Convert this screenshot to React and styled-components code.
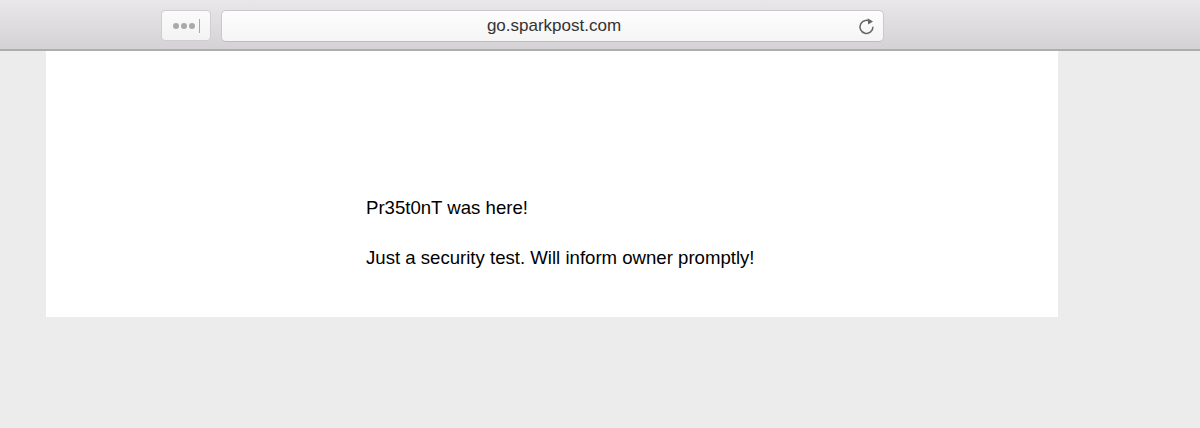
import React from "react";
import styled, { createGlobalStyle } from "styled-components";

const Global = createGlobalStyle`
  html, body { margin: 0; padding: 0; background: #ececec; }
  body { font-family: "Liberation Sans", Arial, sans-serif; }
`;

const Page = styled.div`
  width: 1200px;
  height: 428px;
  background: #ececec;
  display: flex;
  flex-direction: column;
  overflow: hidden;
`;

const Toolbar = styled.div`
  flex: none;
  background: linear-gradient(#e9e7e9, #d4d2d4);
  border-bottom: 2px solid #aeacae;
  display: flex;
  align-items: flex-start;
  padding: 10px 0 0 161px;
  box-sizing: content-box;
  gap: 10px;
  height: 39px;
`;

const DotsButton = styled.div`
  width: 48px;
  height: 29px;
  border: 1px solid #cfcdcf;
  border-radius: 4px;
  background: linear-gradient(#fbfbfb, #f3f3f3);
  display: flex;
  align-items: center;
  justify-content: center;
  gap: 2px;
  box-sizing: content-box;
`;

const Dot = styled.span`
  width: 6px;
  height: 6px;
  border-radius: 50%;
  background: #a9a9a9;
`;

const Bar = styled.span`
  width: 1px;
  height: 14px;
  background: #a9a9a9;
  margin-left: 2px;
`;

const Address = styled.div`
  width: 661px;
  height: 30px;
  border: 1px solid #cbc9cb;
  border-bottom-color: #bebcbe;
  border-radius: 5px;
  background: linear-gradient(#fdfdfd, #f5f5f5);
  display: flex;
  align-items: center;
  justify-content: center;
  position: relative;
  box-sizing: content-box;
`;

const Url = styled.span`
  font-family: "Liberation Sans", Arial, sans-serif;
  font-size: 17px;
  color: #333;
  margin-left: 3px;
`;

const Reload = styled.svg`
  position: absolute;
  right: 6px;
  top: 5px;
`;

const Content = styled.div`
  flex: 1;
  padding-left: 46px;
`;

const Panel = styled.div`
  width: 1012px;
  height: 266px;
  background: #fff;
  box-sizing: border-box;
  padding: 146px 0 0 320px;
`;

const Line = styled.p`
  margin: 0 0 ${(p) => p.$gap || 0}px 0;
  font-family: "Liberation Sans", Arial, sans-serif;
  font-size: 18.6px;
  line-height: 21px;
  color: #000;
`;

export default function App() {
  return (
    <>
      <Global />
      <Page>
        <Toolbar>
          <DotsButton>
            <Dot />
            <Dot />
            <Dot />
            <Bar />
          </DotsButton>
          <Address>
            <Url>go.sparkpost.com</Url>
            <Reload width="20" height="20" viewBox="0 0 20 20">
              <path
                d="M13.8 6 A6.5 6.5 0 1 0 16 10.8"
                fill="none"
                stroke="#666"
                strokeWidth="1.5"
              />
              <path d="M10.6 2.2 L16 5.4 L11.2 8.6 Z" fill="#666" />
            </Reload>
          </Address>
        </Toolbar>
        <Content>
          <Panel>
            <Line $gap={29}>Pr35t0nT was here!</Line>
            <Line>Just a security test. Will inform owner promptly!</Line>
          </Panel>
        </Content>
      </Page>
    </>
  );
}
